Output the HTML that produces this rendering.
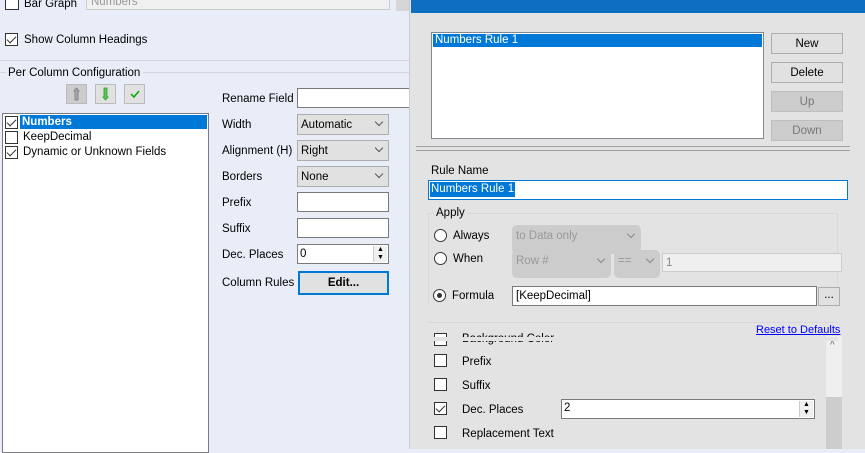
<!DOCTYPE html>
<html><head><style>
*{box-sizing:border-box;margin:0;padding:0}
body{width:865px;height:449px;overflow:hidden;position:relative;font-family:"Liberation Sans",sans-serif;font-size:11.5px;color:#000;background:#e9edf8}
.a{position:absolute}
.cb{position:absolute;width:13px;height:13px;border:1px solid #333;background:#fff}
.cb.k::after{content:"";position:absolute;left:3px;top:0px;width:4px;height:8px;border:solid #333;border-width:0 1.5px 1.5px 0;transform:rotate(45deg)}
.t{position:absolute;white-space:nowrap;margin-top:1px}
.inp{position:absolute;background:#fff;border:1px solid #7a7a7a}
.sel{position:absolute;background:#e1e1e1;border:1px solid #adadad;padding:3px 3px 1px;line-height:14px}
.sel::after{content:"";position:absolute;right:6px;top:4px;width:5px;height:5px;border:solid #555;border-width:0 1px 1px 0;transform:rotate(45deg)}
.btn{position:absolute;background:#e1e1e1;border:1px solid #adadad;text-align:center;line-height:21px}
.dis{background:#cccccc;border-color:#bfbfbf;color:#777}
.rad{position:absolute;width:13px;height:13px;border:1px solid #333;border-radius:50%;background:#fff}
.spin{position:absolute;right:1px;top:1px;width:14px;bottom:1px;border-left:1px solid #ccc;background:#f0f0f0;font-size:7px;line-height:8px;text-align:center}
.dsel{position:absolute;background:#ccc;border-radius:5px;color:#999;padding:4px 4px 2px;line-height:14px}
.dsel::after{content:"";position:absolute;right:7px;top:6px;width:5px;height:5px;border:solid #888;border-width:0 1px 1px 0;transform:rotate(45deg)}
</style></head><body>
<div class="cb" style="left:5px;top:-4px;width:14px;height:14px"></div>
<div class="t" style="left:24px;top:-3px">Bar Graph</div>
<div class="a" style="left:86px;top:-4px;width:304px;height:14px;background:#f0f0f0;border:1px solid #ccc;color:#999;padding-left:4px;line-height:10px">Numbers</div>
<div class="a" style="left:396px;top:0;width:14px;height:11px;background:#d6d6d6"></div>
<div class="cb k" style="left:5px;top:33px"></div>
<div class="t" style="left:24px;top:33px">Show Column Headings</div>
<div class="a" style="left:0;top:60px;width:410px;height:1px;background:#d4d6dc"></div>
<div class="a" style="left:0;top:72px;width:410px;height:1px;background:#d4d6dc"></div>
<div class="t" style="left:6px;top:66px;background:#e9edf8;padding:0 3px 0 2px">Per Column Configuration</div>
<div class="a" style="left:66px;top:84px;width:21px;height:20px;border:1px solid #bbb;background:#ccc"><svg width="19" height="18"><path d="M9.5 3 L12 6 L11 6 L11 15 L8 15 L8 6 L7 6Z" fill="#aaa" stroke="#777" stroke-width=".8"/></svg></div>
<div class="a" style="left:95px;top:84px;width:21px;height:20px;border:1px solid #bbb;background:#e1e1e1"><svg width="19" height="18"><path d="M9.5 15 L12 12 L11 12 L11 3 L8 3 L8 12 L7 12Z" fill="#5c5" stroke="#393" stroke-width=".8"/></svg></div>
<div class="a" style="left:124px;top:84px;width:21px;height:20px;border:1px solid #bbb;background:#e1e1e1"><svg width="19" height="18"><path d="M6 9 L9 12 L14 6" fill="none" stroke="#0a0" stroke-width="1.5"/></svg></div>
<div class="a" style="left:2px;top:113px;width:207px;height:340px;background:#fff;border:1px solid #7a7a80"></div>
<div class="a" style="left:20px;top:115px;width:187px;height:14px;background:#0078d7"></div>
<div class="cb k" style="left:5px;top:116px"></div>
<div class="t" style="left:22px;top:115px;color:#fff;font-weight:bold">Numbers</div>
<div class="cb" style="left:5px;top:131px"></div>
<div class="t" style="left:23px;top:130px">KeepDecimal</div>
<div class="cb k" style="left:5px;top:146px"></div>
<div class="t" style="left:23px;top:145px">Dynamic or Unknown Fields</div>
<div class="t" style="left:222px;top:92px">Rename Field</div>
<div class="inp" style="left:297px;top:88px;width:115px;height:20px"></div>
<div class="t" style="left:222px;top:118px">Width</div>
<div class="sel" style="left:297px;top:114px;width:92px;height:21px">Automatic</div>
<div class="t" style="left:222px;top:144px">Alignment (H)</div>
<div class="sel" style="left:297px;top:140px;width:92px;height:21px">Right</div>
<div class="t" style="left:222px;top:170px">Borders</div>
<div class="sel" style="left:297px;top:166px;width:92px;height:21px">None</div>
<div class="t" style="left:222px;top:196px">Prefix</div>
<div class="inp" style="left:297px;top:192px;width:92px;height:20px"></div>
<div class="t" style="left:222px;top:222px">Suffix</div>
<div class="inp" style="left:297px;top:218px;width:92px;height:20px"></div>
<div class="t" style="left:222px;top:248px">Dec. Places</div>
<div class="inp" style="left:297px;top:244px;width:92px;height:20px;padding-left:2px;line-height:19px">0<div class="spin">▲<br>▼</div></div>
<div class="t" style="left:222px;top:276px">Column Rules</div>
<div class="btn" style="left:298px;top:271px;width:91px;height:24px;border:2px solid #0078d7;font-weight:bold">Edit...</div>
<div class="a" style="left:409px;top:0;width:1px;height:449px;background:#c8ccd6"></div>
<div class="a" style="left:410px;top:0;width:455px;height:449px;background:#e3e3e3"></div>
<div class="a" style="left:411px;top:0;width:454px;height:13px;background:#0e6fc1"></div>
<div class="a" style="left:431px;top:32px;width:333px;height:107px;background:#fff;border:1px solid #828790"></div>
<div class="a" style="left:433px;top:34px;width:329px;height:13px;background:#0078d7"></div>
<div class="t" style="left:435px;top:33px;color:#fff;line-height:13px">Numbers Rule 1</div>
<div class="btn" style="left:771px;top:33px;width:72px;height:21px">New</div>
<div class="btn" style="left:771px;top:62px;width:72px;height:21px">Delete</div>
<div class="btn dis" style="left:771px;top:91px;width:72px;height:21px">Up</div>
<div class="btn dis" style="left:771px;top:120px;width:72px;height:21px">Down</div>
<div class="a" style="left:416px;top:146px;width:434px;height:1px;background:#a0a0a0"></div>
<div class="a" style="left:416px;top:150px;width:434px;height:1px;background:#a0a0a0"></div>
<div class="t" style="left:431px;top:164px">Rule Name</div>
<div class="a" style="left:428px;top:180px;width:420px;height:20px;background:#fff;border:1px solid #0078d7"></div>
<div class="t" style="left:430px;top:181px;background:#0078d7;color:#fff;line-height:15px;padding:0 1px">Numbers Rule 1</div>
<div class="a" style="left:428px;top:213px;width:410px;height:90px;border:1px solid #d8d8d8;border-bottom:0"></div>
<div class="t" style="left:434px;top:206px;background:#e3e3e3;padding:0 2px">Apply</div>
<div class="rad" style="left:434px;top:229px"></div>
<div class="t" style="left:453px;top:229px">Always</div>
<div class="dsel" style="left:512px;top:225px;width:129px;height:29px">to Data only</div>
<div class="rad" style="left:434px;top:252px"></div>
<div class="t" style="left:453px;top:252px">When</div>
<div class="dsel" style="left:512px;top:250px;width:99px;height:28px">Row #</div>
<div class="dsel" style="left:614px;top:250px;width:46px;height:28px">==</div>
<div class="a" style="left:662px;top:253px;width:180px;height:19px;background:#efefef;border:1px solid #ccc;color:#888;padding-left:3px;line-height:19px">1</div>
<div class="rad" style="left:433px;top:289px"></div><div class="a" style="left:437px;top:293px;width:5px;height:5px;border-radius:50%;background:#333"></div>
<div class="t" style="left:452px;top:289px">Formula</div>
<div class="inp" style="left:512px;top:286px;width:305px;height:20px;padding-left:3px;line-height:19px">[KeepDecimal]</div>
<div class="btn" style="left:818px;top:287px;width:22px;height:19px;line-height:15px">...</div>
<div class="a" style="left:428px;top:322px;width:410px;height:127px;background:#e3e3e3;border-top:1px solid #d8d8d8"></div>
<div class="t" style="left:756px;top:323px;color:#00f;text-decoration:underline;font-size:11px">Reset to Defaults</div>
<div class="a" style="left:428px;top:337px;width:410px;height:4px;background:#e3e3e3;z-index:2"></div>
<div class="cb" style="left:434px;top:333px;width:13px"></div>
<div class="t" style="left:462px;top:332px">Background Color</div>
<div class="a" style="left:826px;top:336px;width:16px;height:113px;background:#efefef"></div>
<div class="a" style="left:826px;top:397px;width:16px;height:52px;background:#cdcdcd"></div>
<div class="t" style="left:830px;top:339px;font-size:10px;color:#666">^</div>
<div class="cb" style="left:434px;top:354px"></div>
<div class="t" style="left:462px;top:355px">Prefix</div>
<div class="cb" style="left:434px;top:378px"></div>
<div class="t" style="left:462px;top:379px">Suffix</div>
<div class="cb k" style="left:434px;top:402px"></div>
<div class="t" style="left:462px;top:403px">Dec. Places</div>
<div class="inp" style="left:561px;top:399px;width:254px;height:20px;padding-left:2px;line-height:17px">2<div class="spin">▲<br>▼</div></div>
<div class="cb" style="left:434px;top:426px"></div>
<div class="t" style="left:462px;top:427px">Replacement Text</div>
</body></html>
